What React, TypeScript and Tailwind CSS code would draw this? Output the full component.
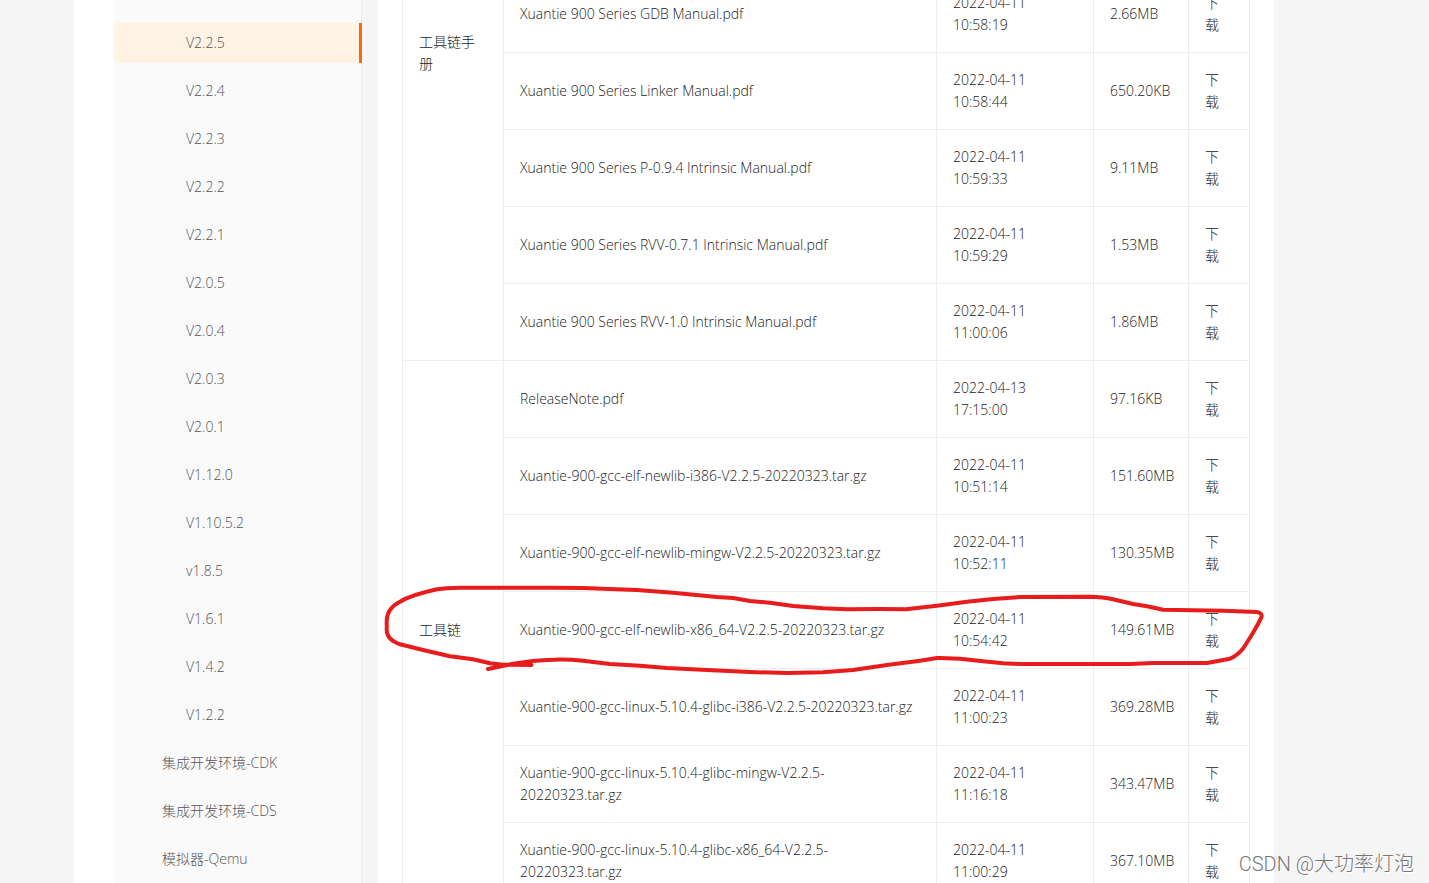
import React from 'react';

interface FileItem {
  name: string;
  date: string;
  time: string;
  size: string;
}

interface FileGroup {
  title: string;
  // The first group starts above the visible area, so its label sits near the top
  titleClass: string;
  files: FileItem[];
}

const versions = [
  'V2.2.5', 'V2.2.4', 'V2.2.3', 'V2.2.2', 'V2.2.1', 'V2.0.5', 'V2.0.4', 'V2.0.3',
  'V2.0.1', 'V1.12.0', 'V1.10.5.2', 'v1.8.5', 'V1.6.1', 'V1.4.2', 'V1.2.2',
];

const products = ['集成开发环境-CDK', '集成开发环境-CDS', '模拟器-Qemu'];

const groups: FileGroup[] = [
  {
    title: '工具链手册',
    titleClass: 'align-top pt-[55px]',
    files: [
      { name: 'Xuantie 900 Series GDB Manual.pdf', date: '2022-04-11', time: '10:58:19', size: '2.66MB' },
      { name: 'Xuantie 900 Series Linker Manual.pdf', date: '2022-04-11', time: '10:58:44', size: '650.20KB' },
      { name: 'Xuantie 900 Series P-0.9.4 Intrinsic Manual.pdf', date: '2022-04-11', time: '10:59:33', size: '9.11MB' },
      { name: 'Xuantie 900 Series RVV-0.7.1 Intrinsic Manual.pdf', date: '2022-04-11', time: '10:59:29', size: '1.53MB' },
      { name: 'Xuantie 900 Series RVV-1.0 Intrinsic Manual.pdf', date: '2022-04-11', time: '11:00:06', size: '1.86MB' },
    ],
  },
  {
    title: '工具链',
    titleClass: 'align-middle',
    files: [
      { name: 'ReleaseNote.pdf', date: '2022-04-13', time: '17:15:00', size: '97.16KB' },
      { name: 'Xuantie-900-gcc-elf-newlib-i386-V2.2.5-20220323.tar.gz', date: '2022-04-11', time: '10:51:14', size: '151.60MB' },
      { name: 'Xuantie-900-gcc-elf-newlib-mingw-V2.2.5-20220323.tar.gz', date: '2022-04-11', time: '10:52:11', size: '130.35MB' },
      { name: 'Xuantie-900-gcc-elf-newlib-x86_64-V2.2.5-20220323.tar.gz', date: '2022-04-11', time: '10:54:42', size: '149.61MB' },
      { name: 'Xuantie-900-gcc-linux-5.10.4-glibc-i386-V2.2.5-20220323.tar.gz', date: '2022-04-11', time: '11:00:23', size: '369.28MB' },
      { name: 'Xuantie-900-gcc-linux-5.10.4-glibc-mingw-V2.2.5-20220323.tar.gz', date: '2022-04-11', time: '11:16:18', size: '343.47MB' },
      { name: 'Xuantie-900-gcc-linux-5.10.4-glibc-x86_64-V2.2.5-20220323.tar.gz', date: '2022-04-11', time: '11:00:29', size: '367.10MB' },
    ],
  },
];

const Sidebar: React.FC = () => (
  <aside className="w-72 shrink-0 bg-white pl-10">
    <ul className="min-h-full border-r border-[#ededed] bg-[#fafafa] pt-[23px] text-[#555]">
      {versions.map((version, index) => (
        <li key={version} className="mb-2">
          <a
            href="#"
            className={
              index === 0
                ? '-mr-px block border-r-3 border-[#ff6a00] bg-[#fff3e6] pl-18 leading-10'
                : 'block pl-18 leading-10'
            }
          >
            {version}
          </a>
        </li>
      ))}
      {products.map((product) => (
        <li key={product} className="mb-2">
          <a href="#" className="block pl-12 leading-10">{product}</a>
        </li>
      ))}
    </ul>
  </aside>
);

const DownloadTable: React.FC = () => (
  <table className="-mt-[25px] w-full table-fixed border-collapse leading-[22px] text-[#222]">
    <colgroup>
      <col className="w-[101px]" />
      <col />
      <col className="w-[157px]" />
      <col className="w-[95px]" />
      <col className="w-[61px]" />
    </colgroup>
    {groups.map((group) => (
      <tbody key={group.title}>
        {group.files.map((file, index) => (
          <tr key={file.name}>
            {index === 0 && (
              <td rowSpan={group.files.length} className={`border border-[#ededed] px-4 ${group.titleClass}`}>
                {group.title}
              </td>
            )}
            <td className="border border-[#ededed] p-4">{file.name}</td>
            <td className="border border-[#ededed] p-4">
              {file.date}
              <br />
              {file.time}
            </td>
            <td className="border border-[#ededed] py-4 pl-4">{file.size}</td>
            <td className="border border-[#ededed] p-4">
              <a href="#" className="block w-4">下载</a>
            </td>
          </tr>
        ))}
      </tbody>
    ))}
  </table>
);

// Hand-drawn loop around the x86_64 newlib row
const RedMark: React.FC = () => (
  <svg
    className="pointer-events-none absolute top-0 left-0"
    width="1429"
    height="883"
    fill="none"
    stroke="#e81c1c"
    strokeWidth="4"
    strokeLinecap="round"
    strokeLinejoin="round"
  >
    <path d="M531.5 665 L503 664.7 L490 663.3 L473 659.3 L450 656.3 L423 650 L400 644.3 Q387 640 386.700 630 L386.700 621 Q387 608 400 601.700 Q411 595 437 589.300 Q446 587.700 460 587.700 L553 587.700 L583 588 L637 590 L673 592.700 L717 597 L733 598 L750 601 L770 602.700 L793 606 L823 608.300 L847 609.300 L880 609 L906 609.300 L937 605.700 L967 601.700 L993 599 L1020 597 L1090 596.700 Q1103 597 1113 599.300 L1133 604 L1147 606.300 L1163 609.700 L1193 610.300 L1223 610.700 L1257 612 Q1262.500 613 1261.500 617 L1258 624 L1251.700 635 L1243.300 648.300 Q1237 656 1230 658.700 L1207 663 L1153 663 L1130 664 L1020 664 L1003 663.300 L983 661.300 L960 658.700 L940 658 L937 658 L920 660.700 L887 665 L853 670 L823 672.300 L787 673 L750 672 L707 670 L667 668 L640 665.700 L610 664 L583 660.700 Q565 658.700 547 660 L533 661 L513 663.700 L488 669" />
  </svg>
);

export default function App() {
  return (
    <div className="relative h-screen overflow-hidden bg-[#f5f5f5] font-['Open_Sans','Noto_Sans_CJK_SC',sans-serif] text-[14px] font-light">
      <div className="flex min-h-full gap-4 pr-[155px] pl-[74px]">
        <Sidebar />
        <main className="min-w-0 flex-1 bg-white px-6">
          <DownloadTable />
        </main>
      </div>
      <RedMark />
      <div className="absolute right-[15px] bottom-1 font-['Roboto','Noto_Sans_CJK_SC',sans-serif] text-xl leading-[30px] font-light text-[#777] [text-shadow:1px_1px_0_#fff]">
        CSDN @大功率灯泡
      </div>
    </div>
  );
}
